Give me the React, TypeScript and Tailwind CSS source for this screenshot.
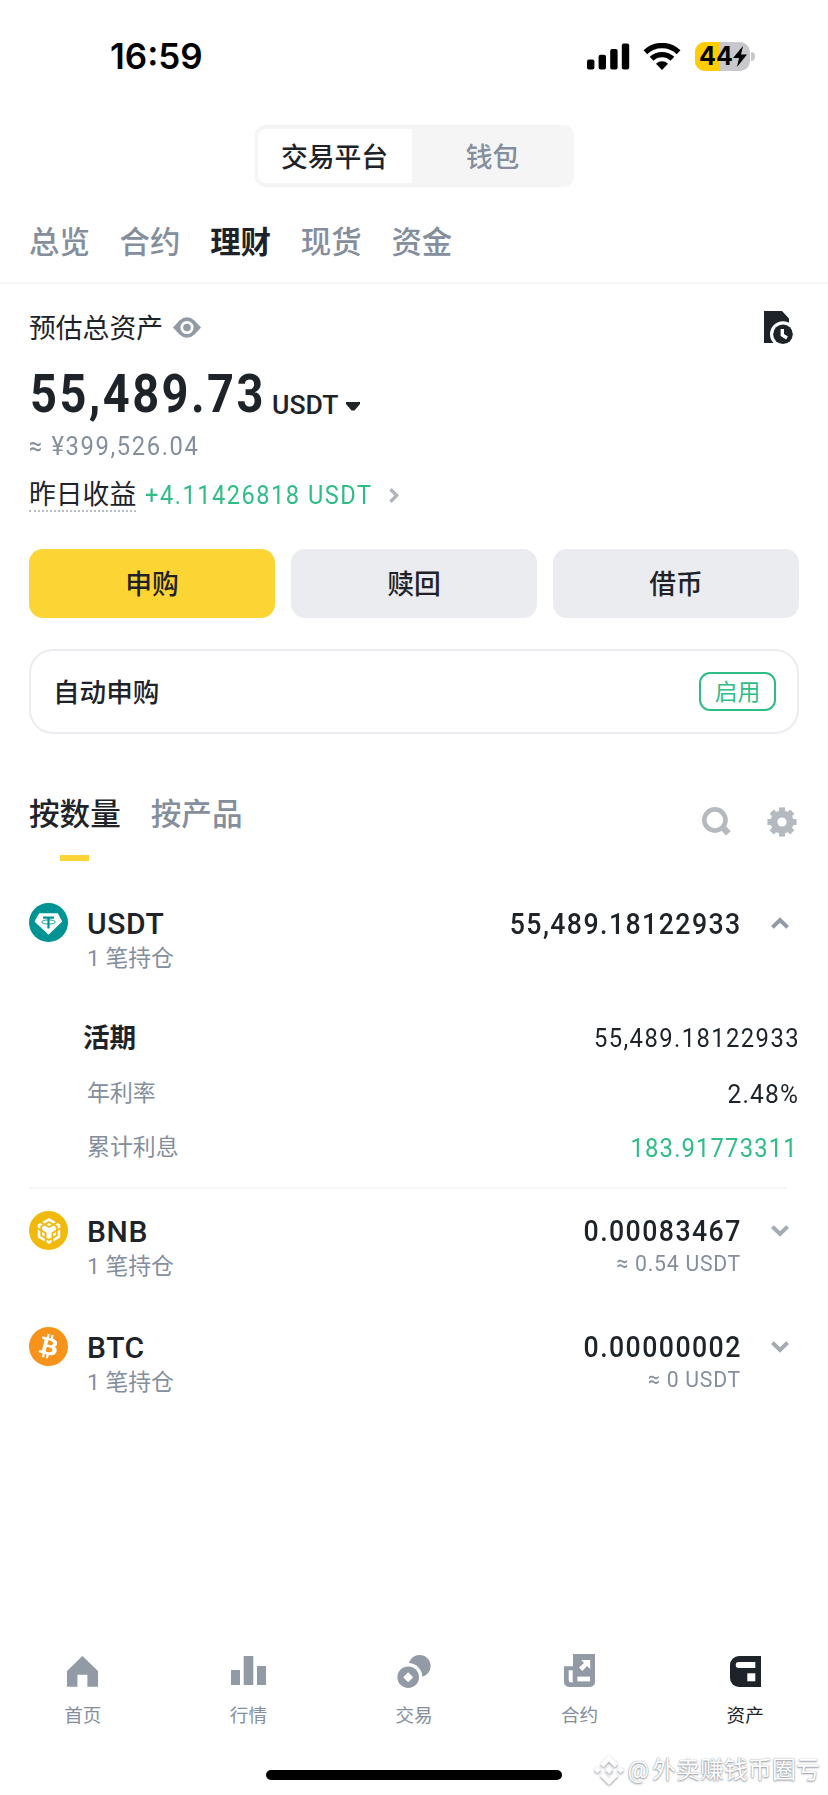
import { useState } from 'react';
import { SiBitcoin, SiBnbchain } from 'react-icons/si';

type Holding = {
  symbol: string;
  amount: string;
  approx?: string;
  positions: string;
};

const accountTabs = ['总览', '合约', '理财', '现货', '资金'];

const holdings: Holding[] = [
  { symbol: 'USDT', amount: '55,489.18122933', positions: '1 笔持仓' },
  { symbol: 'BNB', amount: '0.00083467', approx: '≈ 0.54 USDT', positions: '1 笔持仓' },
  { symbol: 'BTC', amount: '0.00000002', approx: '≈ 0 USDT', positions: '1 笔持仓' },
];

function StatusBar() {
  return (
    <div className="h-[113px] pl-[110px] pr-[73px] flex items-center justify-between text-black">
      <span className="font-['Inter'] font-semibold text-[35px] leading-none">16:59</span>
      <div className="flex items-center">
        <svg className="w-[43px] h-[27px]" viewBox="0 0 43 27">
          <rect x="0" y="16.5" width="7.4" height="10" rx="2" />
          <rect x="11.6" y="11.7" width="7.4" height="14.8" rx="2" />
          <rect x="23.2" y="6" width="7.4" height="20.5" rx="2" />
          <rect x="34.8" y="0.5" width="7.4" height="26" rx="2" />
        </svg>
        <svg className="w-[38px] h-[27px] ml-[13px]" viewBox="0 0 38 27">
          <path d="M2.4 9.2A24 24 0 0 1 35.6 9.2" fill="none" stroke="#000" strokeWidth="5.4" />
          <path d="M8.6 15.8A15 15 0 0 1 29.4 15.8" fill="none" stroke="#000" strokeWidth="5.4" />
          <path d="M19 27L13 20.8A8.6 8.6 0 0 1 25 20.8Z" />
        </svg>
        <div className="relative ml-[14px] w-[55px] h-[29px] rounded-[10px] overflow-hidden bg-[#c7c7cc] flex items-center">
          <div className="absolute inset-y-0 left-0 w-[24px] bg-[#ffcc00]" />
          <span className="relative pl-[4px] font-['Inter'] font-bold text-[25px] leading-none">44</span>
          <svg className="relative w-[14px] h-[21px]" viewBox="0 0 14 21">
            <path d="M10 0L0 12H6L4 21L14 8.5H8Z" />
          </svg>
        </div>
        <div className="ml-[1px] w-[4px] h-[9px] rounded-r-full bg-[#c7c7cc]" />
      </div>
    </div>
  );
}

function EyeIcon() {
  return (
    <svg className="w-[28px] h-[21px]" viewBox="0 0 28 21">
      <path d="M0 10.5L6.5 3.6Q14 -3.2 21.5 3.6L28 10.5L21.5 17.4Q14 24.2 6.5 17.4Z" fill="#929aa5" />
      <circle cx="14" cy="10.5" r="5.2" fill="none" stroke="#fff" strokeWidth="2.8" />
    </svg>
  );
}

function RecordIcon() {
  return (
    <svg className="w-[29px] h-[34px]" viewBox="0 0 29 34">
      <path d="M0 0H18L25 7.4V32H0Z" fill="#1e2329" />
      <circle cx="19" cy="23.3" r="13" fill="#fff" />
      <circle cx="19" cy="23.3" r="9.8" fill="#1e2329" />
      <path d="M18.3 18V24L23 27" fill="none" stroke="#fff" strokeWidth="3.4" />
    </svg>
  );
}

function SearchIcon() {
  return (
    <svg className="w-[29px] h-[29px]" viewBox="0 0 29 29" fill="none" stroke="#b5bac0">
      <circle cx="12.9" cy="13" r="10.6" strokeWidth="4.6" />
      <path d="M20 19.6L26.4 26.4" strokeWidth="6.4" />
    </svg>
  );
}

function GearIcon() {
  return (
    <svg className="w-[30px] h-[30px]" viewBox="0 0 30 30">
      <g fill="#b5bac0">
        <circle cx="15" cy="15" r="11.6" />
        <rect x="12" y="0.4" width="6" height="29.2" />
        <rect x="12" y="0.4" width="6" height="29.2" transform="rotate(45 15 15)" />
        <rect x="12" y="0.4" width="6" height="29.2" transform="rotate(90 15 15)" />
        <rect x="12" y="0.4" width="6" height="29.2" transform="rotate(135 15 15)" />
      </g>
      <circle cx="15" cy="15" r="4.6" fill="#fff" />
    </svg>
  );
}

function CoinIcon({ symbol }: { symbol: string }) {
  if (symbol === 'BTC') {
    return (
      <div className="w-[39px] h-[39px] rounded-full bg-white">
        <SiBitcoin className="w-[39px] h-[39px] text-[#f7931a]" />
      </div>
    );
  }
  if (symbol === 'BNB') {
    return (
      <div className="w-[39px] h-[39px] rounded-full bg-[#f0b90b] flex items-center justify-center">
        <SiBnbchain className="w-[26px] h-[26px] text-white" />
      </div>
    );
  }
  return (
    <svg className="w-[39px] h-[39px]" viewBox="0 0 39 39">
      <circle cx="19.5" cy="19.5" r="19.5" fill="#009393" />
      <path d="M10.2 10.2H28.8L33.2 18.5L19.5 31.8L5.5 18.5Z" fill="#fff" />
      <path d="M14 13.4H25V15.7H20.6V25.6H18.4V15.7H14Z" fill="#009393" />
      <ellipse cx="19.5" cy="19" rx="6.8" ry="2.1" fill="none" stroke="#009393" strokeWidth="0.9" />
    </svg>
  );
}

function Chevron({ open }: { open: boolean }) {
  return (
    <svg className="w-[18px] h-[12px]" viewBox="0 0 18 12" fill="none" strokeWidth="4">
      {open ? <path d="M1.4 10.4L9 3L16.6 10.4" stroke="#929aa5" /> : <path d="M1.4 1.6L9 9L16.6 1.6" stroke="#a5abb3" />}
    </svg>
  );
}

function HoldingRow({ item, open }: { item: Holding; open: boolean }) {
  return (
    <div className="h-[68px] flex">
      <CoinIcon symbol={item.symbol} />
      <div className="ml-[19px] flex-1">
        <div className="h-[42px] flex items-center text-[30px] font-medium tracking-[0.6px]">{item.symbol}</div>
        <div className="h-[29px] flex items-center text-[22.8px] text-[#848e9c]">{item.positions}</div>
      </div>
      <div className="flex flex-col items-end">
        <div className="mr-[-1px] h-[42px] flex items-center text-[30px] font-medium tracking-[1.6px] origin-right scale-x-[0.89]">{item.amount}</div>
        {item.approx && (
          <div className="h-[31px] flex items-center text-[22.8px] text-[#848e9c] tracking-[0.8px] origin-right scale-x-[0.93]">{item.approx}</div>
        )}
      </div>
      <div className="ml-[30px] mr-[10px] mt-[14px]">
        <Chevron open={open} />
      </div>
    </div>
  );
}

const navItems = [
  {
    label: '首页',
    icon: (
      <svg className="w-[31px] h-[34px]" viewBox="0 0 31 34" fill="#929aa5">
        <path d="M15.4 2L31 17V32.7H20.4V20.7H10.4V32.7H0V17Z" />
      </svg>
    ),
  },
  {
    label: '行情',
    icon: (
      <svg className="w-[35px] h-[34px]" viewBox="0 0 35 34" fill="#929aa5">
        <rect x="0" y="16" width="9" height="15" />
        <rect x="12.7" y="2" width="9.6" height="29" />
        <rect x="26" y="12" width="9" height="19" />
      </svg>
    ),
  },
  {
    label: '交易',
    icon: (
      <svg className="w-[34px] h-[34px]" viewBox="0 0 34 34">
        <circle cx="22.6" cy="12" r="11" fill="#929aa5" />
        <circle cx="11.2" cy="23.2" r="14.2" fill="#fff" />
        <circle cx="11.2" cy="23.2" r="10.8" fill="#929aa5" />
        <path d="M11.2 18.2L16.2 23.2L11.2 28.2L6.2 23.2Z" fill="#fff" />
      </svg>
    ),
  },
  {
    label: '合约',
    icon: (
      <svg className="w-[31px] h-[34px]" viewBox="0 0 31 34">
        <path d="M9 0H31V28a5 5 0 0 1-5 5H5a5 5 0 0 1-5-5V12.3H9Z" fill="#929aa5" />
        <path d="M4.7 16.3H8.7V28.5H7.5Q4.7 28.5 4.7 26Z" fill="#fff" />
        <rect x="13.4" y="22.6" width="12.6" height="4.8" fill="#fff" />
        <path d="M17.2 6H26.2V15L23 11.9L18.4 17L15 13.6L20 8.9Z" fill="#fff" />
      </svg>
    ),
  },
  {
    label: '资产',
    icon: (
      <svg className="w-[31px] h-[34px]" viewBox="0 0 31 34">
        <path d="M9 2H31V33H9A9 9 0 0 1 0 24V11A9 9 0 0 1 9 2Z" fill="#1e2329" />
        <path d="M8.7 8H25.3V14H8.7A3 3 0 0 1 8.7 8Z" fill="#fff" />
        <rect x="17.3" y="19.3" width="8" height="8" fill="#fff" />
      </svg>
    ),
  },
];

export default function App() {
  const [accountTab, setAccountTab] = useState('理财');
  const [expanded] = useState('USDT');

  return (
    <div className="w-[828px] h-[1795px] overflow-hidden bg-white flex flex-col text-[#1e2329] font-['Roboto','Noto_Sans_CJK_SC',sans-serif] leading-none">
      <StatusBar />

      {/* Platform switch */}
      <div className="mt-[12px] mx-auto w-[319px] h-[62px] py-[4px] pl-[3px] bg-[#f5f5f5] rounded-[10px] flex text-[26.8px] font-medium">
        <button className="w-[154px] pt-[4px] bg-white rounded-l-[8px]">交易平台</button>
        <button className="flex-1 pt-[4px] text-[#848e9c]">钱包</button>
      </div>

      {/* Account tabs */}
      <div className="h-[97px] pt-[17px] px-[29px] flex items-center gap-[29.8px] text-[30.4px] border-b-2 border-[#f5f5f5]">
        {accountTabs.map((tab) => (
          <button
            key={tab}
            onClick={() => setAccountTab(tab)}
            className={tab === accountTab ? 'font-bold' : 'font-medium text-[#848e9c]'}
          >
            {tab}
          </button>
        ))}
      </div>

      <div className="px-[29px]">
        {/* Balance */}
        <div className="mt-[26px] h-[36px] flex items-center">
          <span className="pt-[3px] text-[26.8px]">预估总资产</span>
          <span className="ml-[10px] -mt-[1px]"><EyeIcon /></span>
          <span className="ml-auto mr-[6px]"><RecordIcon /></span>
        </div>
        <div className="mt-[19px] h-[58px] flex items-baseline">
          <span className="ml-[1px] mr-[-37px] text-[54px] leading-[58px] font-bold tracking-[2.8px] origin-left scale-x-[0.87]">55,489.73</span>
          <span className="ml-[8px] text-[26.6px] font-medium translate-y-[2px]">USDT</span>
          <svg className="ml-[8px] mb-[4px] w-[14px] h-[9px] -translate-y-[1px]" viewBox="0 0 14 9">
            <path d="M0 0H14V2L8.5 8.5H5.5L0 2Z" fill="#1e2329" />
          </svg>
        </div>
        <div className="mt-[7px] h-[32px] flex items-center text-[26.4px] text-[#848e9c] tracking-[1.8px] origin-left scale-x-90">≈ ¥399,526.04</div>
        <div className="mt-[14px] h-[38px] flex items-center">
          <span className="h-[34px] text-[26.8px] leading-[34px] border-b-2 border-dotted border-[#b7bdc6]">昨日收益</span>
          <span className="ml-[9px] mr-[-25px] text-[26.2px] text-[#2ebd85] tracking-[1.7px] origin-left scale-x-90">+4.11426818 USDT</span>
          <svg className="ml-[16px] w-[10px] h-[15px]" viewBox="0 0 10 15" fill="none">
            <path d="M1.5 1.3L7.7 7.5L1.5 13.7" stroke="#b0b5bd" strokeWidth="3.4" />
          </svg>
        </div>

        {/* Actions */}
        <div className="mt-[35px] grid grid-cols-3 gap-[16px] text-[26.8px] font-medium">
          <button className="h-[69px] pt-[4px] rounded-[14px] bg-[#fcd535]">申购</button>
          <button className="h-[69px] pt-[4px] rounded-[14px] bg-[#eaecef]">赎回</button>
          <button className="h-[69px] pt-[4px] rounded-[14px] bg-[#eaecef]">借币</button>
        </div>

        <div className="mt-[31px] h-[85px] pl-[22px] pr-[21px] flex items-center justify-between border-2 border-[#eaecef] rounded-[24px]">
          <span className="pt-[4px] text-[26.6px] font-medium">自动申购</span>
          <button className="w-[77px] h-[39px] pt-[3px] border-2 border-[#2ebd85] rounded-[11px] text-[22.8px] text-[#2ebd85]">启用</button>
        </div>

        {/* Grouping tabs */}
        <div className="mt-[57px] h-[72px] flex text-[30.6px] font-medium">
          <div className="flex flex-col items-center">
            <span className="h-[48px] leading-[48px]">按数量</span>
            <span className="mt-[16px] w-[29px] h-[6px] bg-[#fcd535]" />
          </div>
          <span className="ml-[30px] h-[48px] leading-[48px] text-[#848e9c]">按产品</span>
          <div className="ml-auto mt-[16px] mr-[2px] flex gap-[36px]">
            <SearchIcon />
            <GearIcon />
          </div>
        </div>

        {/* Holdings */}
        <div className="mt-[40px] h-[286px] border-b-2 border-[#f5f5f5] mr-[13px]">
          <div className="mr-[-13px]">
            <HoldingRow item={holdings[0]} open={expanded === 'USDT'} />
            <div className="mt-[42px] pl-[54px]">
              <div className="h-[50px] flex items-center justify-between text-[26.4px]">
                <span className="font-bold text-[26.6px]">活期</span>
                <span className="mr-[-1px] tracking-[1.6px] origin-right scale-x-90">55,489.18122933</span>
              </div>
              <div className="mt-[6px] pl-[4px] h-[50px] flex items-center justify-between text-[26.4px]">
                <span className="text-[22.9px] text-[#848e9c]">年利率</span>
                <span className="tracking-[1.3px] origin-right scale-x-[0.93]">2.48%</span>
              </div>
              <div className="mt-[4px] pl-[4px] h-[50px] flex items-center justify-between text-[26.4px]">
                <span className="text-[22.9px] text-[#848e9c]">累计利息</span>
                <span className="mr-[1px] text-[#2ebd85] tracking-[1.3px] origin-right scale-x-90">183.91773311</span>
              </div>
            </div>
          </div>
        </div>
        <div className="mt-[22px]">
          <HoldingRow item={holdings[1]} open={expanded === 'BNB'} />
        </div>
        <div className="mt-[48px]">
          <HoldingRow item={holdings[2]} open={expanded === 'BTC'} />
        </div>
      </div>

      {/* Bottom nav */}
      <div className="mt-auto grid grid-cols-5 text-[18.6px] text-[#848e9c]">
        {navItems.map((item) => (
          <div key={item.label} className="flex flex-col items-center">
            {item.icon}
            <span className={item.label === '资产' ? 'mt-[19px] text-[#1e2329]' : 'mt-[19px]'}>{item.label}</span>
          </div>
        ))}
      </div>
      <div className="relative mt-[27px] h-[42px] flex justify-center items-start">
        <div className="mt-[17px] w-[296px] h-[10px] rounded-full bg-black" />
        <div className="absolute right-[8px] top-[2px] flex items-center text-[24px] text-white [text-shadow:0_1px_2px_#8a8f99,0_0_1px_#8a8f99]">
          <svg className="w-[30px] h-[30px] mr-[3px] drop-shadow-[0_1px_1px_#8a8f99]" viewBox="0 0 30 30" fill="#fff">
            <path d="M15 0L24 9L20.6 12.4L15 6.8L9.4 12.4L6 9Z" />
            <path d="M15 30L24 21L20.6 17.6L15 23.2L9.4 17.6L6 21Z" />
            <path d="M3.4 11.6L6.8 15L3.4 18.4L0 15Z" />
            <path d="M26.6 11.6L30 15L26.6 18.4L23.2 15Z" />
            <path d="M15 11L19 15L15 19L11 15Z" />
          </svg>
          <span className="mr-[3px]">@</span>
          <span>外卖赚钱币圈亏</span>
        </div>
      </div>
    </div>
  );
}
